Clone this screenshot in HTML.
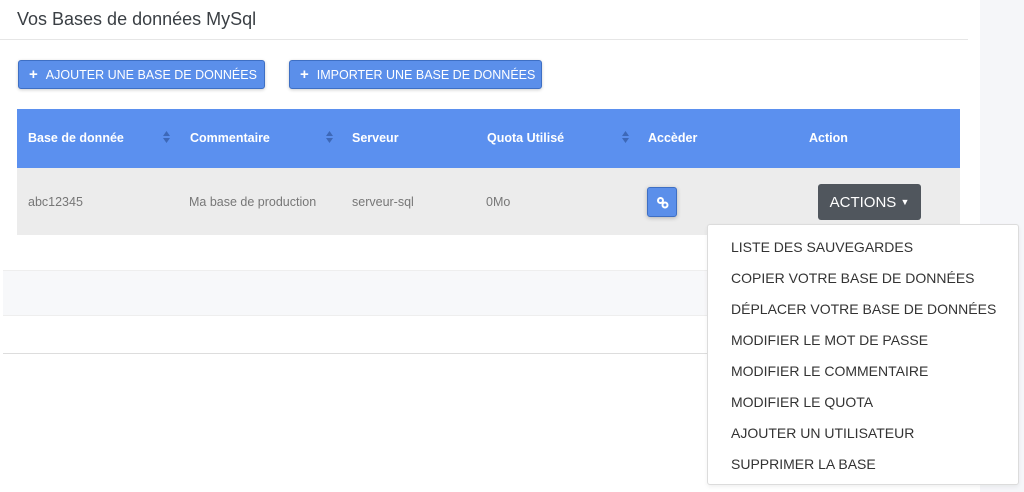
<!DOCTYPE html>
<html><head><meta charset="utf-8"><style>
*{margin:0;padding:0;box-sizing:border-box}
body{width:1024px;height:492px;background:#fff;font-family:"Liberation Sans",Arial,sans-serif;position:relative;overflow:hidden}
.a{position:absolute}
.strip{left:980px;top:0;width:44px;height:492px;background:#f5f6f9}
.title{left:17px;top:9px;font-size:18px;color:#3a3f44}
.hl{left:0;top:39px;width:968px;height:1px;background:#e6e6e6}
.btn{top:60px;height:29px;background:#5b8fea;border:1px solid #3e6fc4;border-radius:3px;color:#fff;font-size:12.5px;line-height:27px;padding-left:10px;box-shadow:0 1px 3px rgba(0,0,0,.2)}
.btn b{font-size:15px;margin-right:8px}
.thead{left:17px;top:109px;width:943px;height:59px;background:#5b90ef;color:#fff;font-weight:bold;font-size:12.5px}
.thead span,.row span{position:absolute;top:22px}
.sort{position:absolute;top:22px;width:7px;height:12px}
.row{left:17px;top:168px;width:943px;height:67px;background:#ececec;color:#777;font-size:12.5px}
.row span{top:27px}
.link{left:647px;top:187px;width:30px;height:30px;background:#5b8fea;border:1px solid #3e6fc4;border-radius:3px;box-shadow:0 1px 4px rgba(0,0,0,.25)}
.act{left:818px;top:184px;width:103px;height:36px;background:#50565d;border-radius:3px;color:#fff;font-size:15px;line-height:36px;text-align:center}
.band{left:3px;top:270px;width:977px;height:46px;background:#f7f8fa;border-top:1px solid #eee;border-bottom:1px solid #eee}
.ln{left:3px;top:353px;width:710px;height:1px;background:#ddd}
.dd{left:707px;top:224px;width:312px;height:261px;background:#fff;border:1px solid #dcdcdc;border-radius:3px;box-shadow:0 2px 4px rgba(0,0,0,.06)}
.dd div{position:absolute;left:23px;font-size:14px;color:#333}
</style></head><body>
<div class="a strip"></div>
<div class="a title">Vos Bases de données MySql</div>
<div class="a hl"></div>
<div class="a btn" style="left:18px;width:247px"><b>+</b>AJOUTER UNE BASE DE DONNÉES</div>
<div class="a btn" style="left:289px;width:253px"><b>+</b>IMPORTER UNE BASE DE DONNÉES</div>
<div class="a thead">
<span style="left:11px">Base de donnée</span>
<svg class="sort" style="left:146px" viewBox="0 0 7 12"><path d="M0 5L3.5 0L7 5Z M0 7L3.5 12L7 7Z" fill="#3d68b8"/></svg>
<span style="left:173px">Commentaire</span>
<svg class="sort" style="left:309px" viewBox="0 0 7 12"><path d="M0 5L3.5 0L7 5Z M0 7L3.5 12L7 7Z" fill="#3d68b8"/></svg>
<span style="left:335px">Serveur</span>
<span style="left:470px">Quota Utilisé</span>
<svg class="sort" style="left:605px" viewBox="0 0 7 12"><path d="M0 5L3.5 0L7 5Z M0 7L3.5 12L7 7Z" fill="#3d68b8"/></svg>
<span style="left:631px">Accèder</span>
<span style="left:792px">Action</span>
</div>
<div class="a row">
<span style="left:11px">abc12345</span>
<span style="left:172px">Ma base de production</span>
<span style="left:335px">serveur-sql</span>
<span style="left:469px">0Mo</span>
</div>
<div class="a link"><svg width="30" height="30" viewBox="0 0 30 30"><g fill="none" stroke="#fff" stroke-width="2"><circle cx="12.5" cy="12.5" r="2.5"/><circle cx="17" cy="17" r="2.5"/></g></svg></div>
<div class="a act">ACTIONS <span style="font-size:9px;vertical-align:2px">▼</span></div>
<div class="a band"></div>
<div class="a ln"></div>
<div class="a dd">
<div style="top:14px">LISTE DES SAUVEGARDES</div>
<div style="top:45px">COPIER VOTRE BASE DE DONNÉES</div>
<div style="top:76px">DÉPLACER VOTRE BASE DE DONNÉES</div>
<div style="top:107px">MODIFIER LE MOT DE PASSE</div>
<div style="top:138px">MODIFIER LE COMMENTAIRE</div>
<div style="top:169px">MODIFIER LE QUOTA</div>
<div style="top:200px">AJOUTER UN UTILISATEUR</div>
<div style="top:231px">SUPPRIMER LA BASE</div>
</div>
</body></html>
